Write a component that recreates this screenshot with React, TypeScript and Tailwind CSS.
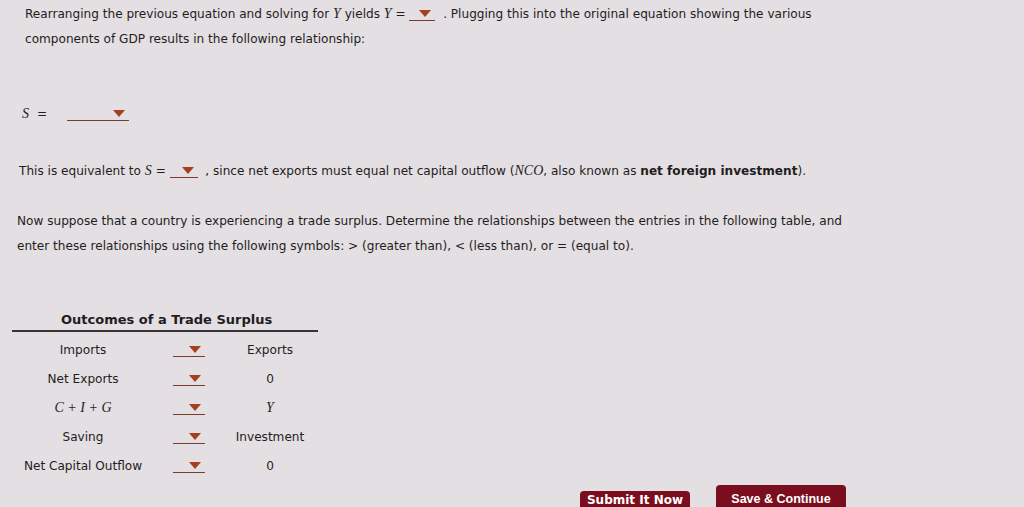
function Drop({ width = 'w-[32px]' }: { width?: string }) {
  return (
    <span className={`relative inline-block h-[13px] ${width} border-b-[1.5px] border-[#7b3b2b] align-[-3px]`}>
      <svg viewBox="0 0 12 7" className="absolute right-[4px] top-[2px] h-[7px] w-[12px]">
        <polygon points="0,0 12,0 6,7" fill="#a4401c" />
      </svg>
    </span>
  )
}

const serif = { fontFamily: '"Liberation Serif", "Times New Roman", serif' }

function M({ children }: { children: React.ReactNode }) {
  return (
    <i style={serif} className="text-[14px] leading-none">
      {children}
    </i>
  )
}

const ROWS = [
  { left: 'Imports', right: 'Exports' },
  { left: 'Net Exports', right: '0' },
  { left: 'C + I + G', right: 'Y', math: true },
  { left: 'Saving', right: 'Investment' },
  { left: 'Net Capital Outflow', right: '0' },
]

export default function App() {
  return (
    <div
      className="relative h-[507px] w-[1024px] overflow-hidden bg-[#e3dfe3] text-[12.1px] text-[#1f1d20]"
      style={{ fontFamily: '"DejaVu Sans", Verdana, sans-serif' }}
    >
      <div className="pl-[25px] pt-[2px] leading-[25px]">
        <p>
          Rearranging the previous equation and solving for <M>Y</M> yields <M>Y</M> = <Drop width="w-[26px]" />{' '}
          &nbsp;. Plugging this into the original equation showing the various
        </p>
        <p>components of GDP results in the following relationship:</p>
      </div>

      <div className="mt-[52px] flex h-[20px] items-center pl-[22px]">
        <M>S</M>
        <span className="ml-[8px]">=</span>
        <span className="ml-[20px]">
          <Drop width="w-[62px]" />
        </span>
      </div>

      <p className="mt-[37px] pl-[19px] leading-[20px]">
        This is equivalent to <M>S</M> = <Drop width="w-[28px]" /> &nbsp;, since net exports must equal net capital
        outflow (<M>NCO</M>, also known as <b>net foreign investment</b>).
      </p>

      <div className="mt-[28px] pl-[17px] leading-[25px]">
        <p>
          Now suppose that a country is experiencing a trade surplus. Determine the relationships between the entries in
          the following table, and
        </p>
        <p>enter these relationships using the following symbols: &gt; (greater than), &lt; (less than), or = (equal to).</p>
      </div>

      <div className="mt-[51px] ml-[12px] w-[306px]">
        <div className="border-b-[2px] border-[#3a3438] pb-0 pl-[49px] text-[13px] font-bold">
          Outcomes of a Trade Surplus
        </div>
        <div className="mt-[4px] flex flex-col">
          {ROWS.map((r) => (
            <div key={r.left} className="flex h-[29px] items-center">
              <div className="w-[142px] shrink-0 text-center">{r.math ? <M>C + I + G</M> : r.left}</div>
              <div className="ml-[19px] w-[32px] shrink-0">
                <Drop width="w-[32px]" />
              </div>
              <div className="w-[130px] shrink-0 text-center">{r.math ? <M>Y</M> : r.right}</div>
            </div>
          ))}
        </div>
      </div>

      <div className="absolute bottom-0 left-[580px] flex items-end gap-[26px]">
        <button className="h-[16px] w-[110px] rounded-t-[4px] bg-[#7a0d1e] pt-[2px] text-[12px] font-bold leading-none text-white">
          Submit It Now
        </button>
        <button
          className="h-[22px] w-[130px] rounded-t-[4px] bg-[#7a0d1e] pt-[7px] text-[12.5px] font-bold leading-none text-white"
          style={{ fontFamily: '"Liberation Sans", Arial, sans-serif' }}
        >
          Save &amp; Continue
        </button>
      </div>
    </div>
  )
}
